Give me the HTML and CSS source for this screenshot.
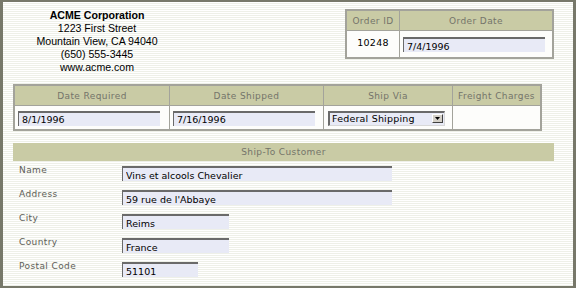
FILE: index.html
```html
<!DOCTYPE html>
<html>
<head>
<meta charset="utf-8">
<link rel="stylesheet" href="styles.css">
</head>
<body>
<div class="frame">
  <div class="top">
    <div class="company">
      <div class="co-name">ACME Corporation</div>
      <div>1223 First Street</div>
      <div>Mountain View, CA 94040</div>
      <div>(650) 555-3445</div>
      <div>www.acme.com</div>
    </div>
    <table class="grid order">
      <tr><th class="c-id">Order ID</th><th class="c-date">Order Date</th></tr>
      <tr><td class="num">10248</td><td><input class="fld w142" value="7/4/1996"></td></tr>
    </table>
  </div>
  <table class="grid ship">
    <tr>
      <th class="c1">Date Required</th>
      <th class="c2">Date Shipped</th>
      <th class="c3">Ship Via</th>
      <th class="c4">Freight Charges</th>
    </tr>
    <tr>
      <td><input class="fld w142" value="8/1/1996"></td>
      <td><input class="fld w142" value="7/16/1996"></td>
      <td>
        <span class="sel">
          <span class="sel-text">Federal Shipping</span>
          <span class="sel-btn"><svg width="7" height="4" viewBox="0 0 7 4"><path d="M0 0h7L3.5 4z" fill="#000"/></svg></span>
        </span>
      </td>
      <td></td>
    </tr>
  </table>
  <div class="band">Ship-To Customer</div>
  <div class="rows">
    <div class="row"><span class="lbl">Name</span><input class="fld w270" value="Vins et alcools Chevalier"></div>
    <div class="row"><span class="lbl">Address</span><input class="fld w270" value="59 rue de l'Abbaye"></div>
    <div class="row"><span class="lbl">City</span><input class="fld w107" value="Reims"></div>
    <div class="row"><span class="lbl">Country</span><input class="fld w107" value="France"></div>
    <div class="row"><span class="lbl">Postal Code</span><input class="fld w76" value="51101"></div>
  </div>
</div>
</body>
</html>
```
FILE: styles.css
```css
html, body { margin: 0; padding: 0; }
body {
  width: 576px;
  height: 288px;
  overflow: hidden;
  font-family: "DejaVu Sans", Verdana, sans-serif;
}
.frame {
  box-sizing: border-box;
  width: 576px;
  height: 288px;
  border-style: solid;
  border-color: #77786a;
  border-width: 2px 3px 2px 3px;
  background: repeating-linear-gradient(to bottom, #ffffff 0px, #ffffff 1px, #eef0e8 1px, #eef0e8 2px);
  padding: 0 0 0 10px;
}
.top {
  display: flex;
  align-items: flex-start;
  height: 82px;
}
.company {
  width: 168px;
  padding-top: 7px;
  text-align: center;
  font-family: "Liberation Sans", Arial, sans-serif;
  font-size: 10.6px;
  line-height: 13px;
  color: #000;
}
.co-name { font-weight: bold; }
.grid {
  border-collapse: collapse;
  border: 2px solid #a3a39b;
  background: #fdfdfb;
}
.grid th {
  background: #c9cba5;
  color: #74746a;
  font-weight: normal;
  font-size: 9px;
  letter-spacing: 0.4px;
  height: 19px;
  padding: 0;
  border: 1px solid #a3a39b;
  text-align: center;
}
.grid td {
  border: 1px solid #a3a39b;
  height: 23px;
  padding: 0 0 0 3px;
  vertical-align: middle;
}
.order { margin-left: 164px; margin-top: 7px; }
.order .c-id { width: 52px; }
.order .c-date { width: 152px; }
.order tr:last-child td { height: 22px; }
.order td.num {
  text-align: center;
  padding: 0 0 4px 0;
  font-size: 9.5px;
  letter-spacing: 0.3px;
  color: #000;
}
.ship { margin-top: 0; }
.ship .c1 { width: 154px; }
.ship .c2 { width: 153px; }
.ship .c3 { width: 128px; }
.ship .c4 { width: 87px; }
.fld {
  box-sizing: border-box;
  height: 15px;
  margin: 0;
  padding: 1px 0 0 3px;
  border: none;
  border-top: 2px solid #6a6a6a;
  border-left: 1px solid #6a6a6a;
  background: #e8eaf6;
  font-family: "DejaVu Sans", Verdana, sans-serif;
  font-size: 9.5px;
  letter-spacing: 0;
  color: #000;
  outline: none;
}
.w142 { width: 142px; }
.w270 { width: 270px; }
.w107 { width: 107px; }
.w76 { width: 76px; }
.sel {
  position: relative;
  display: inline-block;
  box-sizing: border-box;
  width: 117px;
  height: 15px;
  margin-left: 1px;
  border-top: 2px solid #6a6a6a;
  border-left: 2px solid #6a6a6a;
  border-right: 1px solid #d8d8d8;
  border-bottom: 1px solid #d8d8d8;
  background: #e8eaf6;
  vertical-align: middle;
}
.sel-text {
  display: block;
  padding-left: 2px;
  font-size: 9.5px;
  line-height: 12px;
  letter-spacing: 0.2px;
  color: #000;
}
.sel-btn {
  position: absolute;
  right: 1px;
  top: 1px;
  width: 11px;
  height: 9px;
  box-sizing: border-box;
  background: #d4d0c8;
  border: 1px solid;
  border-color: #fff #404040 #404040 #fff;
  display: flex;
  align-items: center;
  justify-content: center;
}
.sel-btn svg { width: 5px; height: 3px; }
.band {
  margin-top: 12px;
  width: 541px;
  height: 18px;
  background: #c9cba5;
  color: #74746a;
  font-size: 9px;
  letter-spacing: 0.4px;
  line-height: 18px;
  text-align: center;
}
.rows { padding-top: 5px; }
.row {
  display: flex;
  align-items: flex-start;
  height: 24px;
}
.lbl {
  width: 103px;
  padding-left: 6px;
  font-size: 9px;
  letter-spacing: 0.4px;
  color: #606058;
  line-height: 11px;
  margin-top: -1px;
}
```
